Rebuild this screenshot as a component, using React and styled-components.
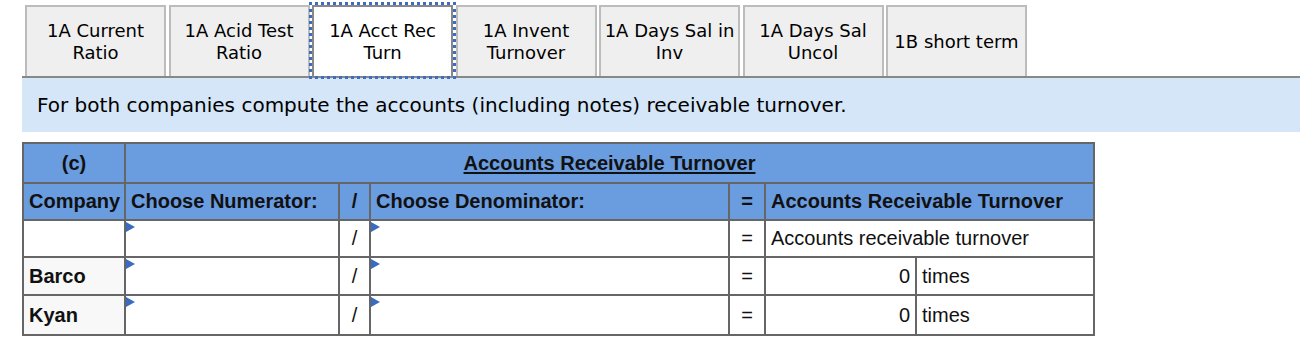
import React from 'react';
import styled, { createGlobalStyle, css } from 'styled-components';

const GlobalStyle = createGlobalStyle`
  body {
    margin: 0;
    background: #fff;
  }
`;

const Page = styled.div`
  padding: 5px 0 0 22px;
`;

const TabBar = styled.div`
  display: flex;
  gap: 2.5px;
  padding-left: 3px;
  border-bottom: 2px solid #888;
`;

const Tab = styled.button`
  box-sizing: border-box;
  width: 141px;
  height: 71px;
  padding: 0 1px;
  display: flex;
  align-items: center;
  justify-content: center;
  text-align: center;
  background: #efefef;
  border: 2px solid #bcbcbc;
  border-bottom: none;
  font-family: 'DejaVu Sans', Verdana, sans-serif;
  font-size: 18px;
  line-height: 22px;
  color: #000;
  cursor: pointer;

  ${(props) =>
    props.active &&
    css`
      background: #fff;
      border-color: #888;
      outline: 3px dotted #3d6cc0;
      outline-offset: 0;
    `}
`;

const Prompt = styled.div`
  height: 54px;
  display: flex;
  align-items: center;
  padding-left: 15px;
  background: #d4e6f7;
  font-family: 'DejaVu Sans', Verdana, sans-serif;
  font-size: 20px;
  color: #000;
`;

const Grid = styled.table`
  margin-top: 10px;
  border-collapse: collapse;
  table-layout: fixed;
  width: 1071px;
  font-family: 'Liberation Sans', Arial, sans-serif;
  font-size: 20px;
  color: #111;
`;

const Row = styled.tr`
  height: ${(props) => props.h || 38}px;
`;

const Cell = styled.td`
  border: 2px solid #666;
  padding: 0 5px;
  text-align: ${(props) => props.align || 'left'};
  font-weight: ${(props) => (props.bold ? 700 : 400)};
  background: ${(props) => (props.head ? '#6a9ce0' : props.shade ? '#f8f8f8' : '#fff')};
  white-space: nowrap;
  vertical-align: middle;

  ${(props) =>
    props.pick &&
    css`
      position: relative;
      &::before {
        content: '';
        position: absolute;
        left: 0;
        top: 1px;
        border-top: 5px solid transparent;
        border-bottom: 5px solid transparent;
        border-left: 9px solid #3a6bbf;
      }
    `}
`;

const Title = styled.span`
  text-decoration: underline;
  text-underline-offset: 2px;
`;

const tabs = [
  ['1A Current', 'Ratio'],
  ['1A Acid Test', 'Ratio'],
  ['1A Acct Rec', 'Turn'],
  ['1A Invent', 'Turnover'],
  ['1A Days Sal in', 'Inv'],
  ['1A Days Sal', 'Uncol'],
  ['1B short term'],
];

const companies = ['Barco', 'Kyan'];

export default function App() {
  return (
    <Page>
      <GlobalStyle />
      <TabBar>
        {tabs.map((lines, i) => (
          <Tab key={i} active={i === 2}>
            <span>
              {lines.map((line, j) => (
                <React.Fragment key={j}>
                  {j > 0 && <br />}
                  {line}
                </React.Fragment>
              ))}
            </span>
          </Tab>
        ))}
      </TabBar>
      <Prompt>For both companies compute the accounts (including notes) receivable turnover.</Prompt>
      <Grid>
        <colgroup>
          <col style={{ width: 102 }} />
          <col style={{ width: 214 }} />
          <col style={{ width: 31 }} />
          <col style={{ width: 359 }} />
          <col style={{ width: 36 }} />
          <col style={{ width: 151 }} />
          <col style={{ width: 178 }} />
        </colgroup>
        <tbody>
          <Row h={40}>
            <Cell head bold align="center">(c)</Cell>
            <Cell head bold align="center" colSpan={6}>
              <Title>Accounts Receivable Turnover</Title>
            </Cell>
          </Row>
          <Row h={37}>
            <Cell head bold>Company</Cell>
            <Cell head bold>Choose Numerator:</Cell>
            <Cell head bold align="center">/</Cell>
            <Cell head bold>Choose Denominator:</Cell>
            <Cell head bold align="center">=</Cell>
            <Cell head bold colSpan={2}>Accounts Receivable Turnover</Cell>
          </Row>
          <Row h={37}>
            <Cell />
            <Cell pick />
            <Cell align="center">/</Cell>
            <Cell pick />
            <Cell align="center">=</Cell>
            <Cell colSpan={2}>Accounts receivable turnover</Cell>
          </Row>
          {companies.map((name, i) => (
            <Row key={name} h={i === 1 ? 40 : 38}>
              <Cell bold shade>{name}</Cell>
              <Cell pick />
              <Cell align="center">/</Cell>
              <Cell pick />
              <Cell align="center">=</Cell>
              <Cell align="right">0</Cell>
              <Cell>times</Cell>
            </Row>
          ))}
        </tbody>
      </Grid>
    </Page>
  );
}
